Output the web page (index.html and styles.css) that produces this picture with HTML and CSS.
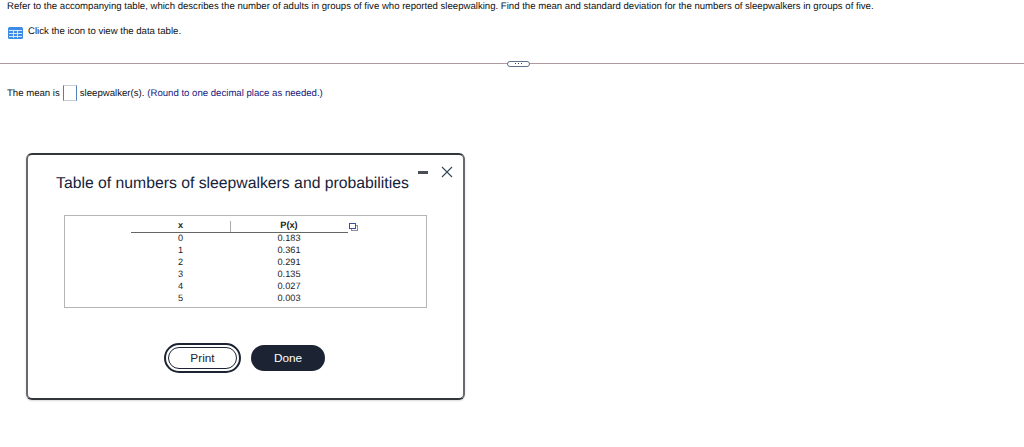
FILE: index.html
```html
<!DOCTYPE html>
<html lang="en">
<head>
<meta charset="utf-8">
<title>Sleepwalkers</title>
<link rel="stylesheet" href="styles.css">
</head>
<body>
<div class="question">
  <p class="intro">Refer to the accompanying table, which describes the number of adults in groups of five who reported sleepwalking. Find the mean and standard deviation for the numbers of sleepwalkers in groups of five.</p>
  <p class="data-link">
    <svg class="grid-icon" width="15" height="12" viewBox="0 0 15 12">
      <rect x="0" y="0" width="15" height="12" rx="1.5" fill="#3d8be4"/>
      <path d="M1 3.5 H14 M1 6.5 H14 M1 9.5 H14 M5.5 3.5 V11 M9.5 3.5 V11" stroke="#d5e6f9" stroke-width="1" fill="none"/>
    </svg>
    <span>Click the icon to view the data table.</span>
  </p>
</div>
<div class="divider">
  <span class="more"><i></i><i></i><i></i></span>
</div>
<p class="answer">
  <span>The mean is</span>
  <span class="input"></span>
  <span>sleepwalker(s).</span>
  <span class="hint">(Round to one decimal place as needed.)</span>
</p>
<section class="dialog">
  <header class="dialog-head">
    <h2>Table of numbers of sleepwalkers and probabilities</h2>
    <div class="controls">
      <span class="minimize"></span>
      <svg class="close" width="12" height="12" viewBox="0 0 12 12"><path d="M1 1 L11 11 M11 1 L1 11" stroke="#33475b" stroke-width="1.1" fill="none"/></svg>
    </div>
  </header>
  <div class="table-box">
    <table class="data">
      <thead><tr><th class="col-x">x</th><th class="col-p">P(x)</th></tr></thead>
      <tbody>
        <tr><td>0</td><td>0.183</td></tr>
        <tr><td>1</td><td>0.361</td></tr>
        <tr><td>2</td><td>0.291</td></tr>
        <tr><td>3</td><td>0.135</td></tr>
        <tr><td>4</td><td>0.027</td></tr>
        <tr><td>5</td><td>0.003</td></tr>
      </tbody>
    </table>
    <svg class="copy" width="9" height="8" viewBox="0 0 9 8">
      <rect x="2.5" y="2.5" width="6" height="5" fill="#fff" stroke="#8a8fa8"/>
      <rect x="0.5" y="0.5" width="6" height="5" fill="#fff" stroke="#3d4fa0"/>
    </svg>
  </div>
  <div class="actions">
    <button class="btn print">Print</button>
    <button class="btn done">Done</button>
  </div>
</section>
</body>
</html>
```

FILE: styles.css
```css
* { box-sizing: border-box; }
html, body { margin: 0; padding: 0; background: #fff; }
body {
  width: 1024px;
  height: 447px;
  overflow: hidden;
  font-family: "Liberation Sans", Arial, sans-serif;
  font-size: 9.6px;
  color: #111;
  text-rendering: geometricPrecision;
}
p { margin: 0; }
.question { padding: 2px 0 0 7px; }
.intro { line-height: 10px; white-space: nowrap; }
.data-link {
  display: flex;
  align-items: flex-start;
  gap: 5px;
  margin: 15px 0 0 1px;
  height: 12px;
  line-height: 10px;
}
.grid-icon { display: block; }
.divider {
  margin-top: 24px;
  height: 1px;
  background: #b09aa2;
  display: flex;
  justify-content: center;
  align-items: center;
  padding-left: 12px;
}
.more {
  width: 23px;
  height: 6px;
  flex: none;
  border: 1px solid #5f7186;
  border-radius: 3px;
  background: #fff;
  display: flex;
  justify-content: center;
  align-items: center;
  gap: 2px;
}
.more i { width: 1px; height: 1px; background: #33475b; }
.answer {
  display: flex;
  align-items: center;
  height: 16px;
  margin: 21px 0 0 7px;
  white-space: nowrap;
}
.input {
  width: 14px;
  height: 16px;
  margin: 0 3px 0 3px;
  border: 1px solid #c5ced8;
  border-left-color: #4f80b8;
  border-right-color: #4f80b8;
}
.hint { color: #14187e; margin-left: 3px; }
.dialog {
  width: 439px;
  height: 247px;
  margin: 52px 0 0 26px;
  padding: 0 0 0 28px;
  border: 2px solid #33373c;
  border-left-color: #66696e;
  border-right-color: #66696e;
  border-radius: 6px;
  box-shadow: 0 1px 2px rgba(0, 0, 0, 0.15);
  display: flex;
  flex-direction: column;
}
.dialog-head {
  display: flex;
  align-items: flex-start;
  height: 60px;
}
.dialog-head h2 {
  margin: 19px 0 0;
  font-size: 15.75px;
  line-height: 19px;
  font-weight: normal;
  color: #16233a;
  white-space: nowrap;
}
.controls {
  display: flex;
  align-items: center;
  gap: 13px;
  margin: 11px 0 0 9px;
}
.minimize { width: 10px; height: 3px; background: #4a4f55; }
.table-box {
  width: 363px;
  height: 93px;
  margin-left: 8px;
  border: 1px solid #b5b5b5;
  display: flex;
  align-items: flex-start;
  padding: 4px 0 0 66px;
}
.data {
  border-collapse: collapse;
  font-size: 9.2px;
  color: #222;
  text-align: center;
}
.data th { font-weight: bold; height: 12px; padding: 0; line-height: 11px; border-bottom: 1px solid #666; }
.data td { height: 12px; padding: 0; line-height: 11px; }
.col-x { width: 99px; }
.col-p { width: 118px; position: relative; }
.col-p::before {
  content: "";
  position: absolute;
  left: 0;
  top: 1px;
  bottom: 0;
  width: 1px;
  background: #aaa;
}
.copy { margin: 3px 0 0 1px; }
.actions {
  display: flex;
  align-items: center;
  gap: 10px;
  margin: 35px 0 0 108px;
}
.btn {
  font-family: "Liberation Sans", Arial, sans-serif;
  font-size: 11.8px;
  border-radius: 15px;
  padding: 0;
}
.print {
  width: 77px;
  height: 30px;
  background: #fff;
  color: #1c2433;
  border: 2px solid #1c2433;
  outline: 1px solid #1c2433;
  outline-offset: -5px;
}
.done {
  width: 74px;
  height: 26px;
  background: #1c2433;
  color: #fff;
  border: none;
}
```
